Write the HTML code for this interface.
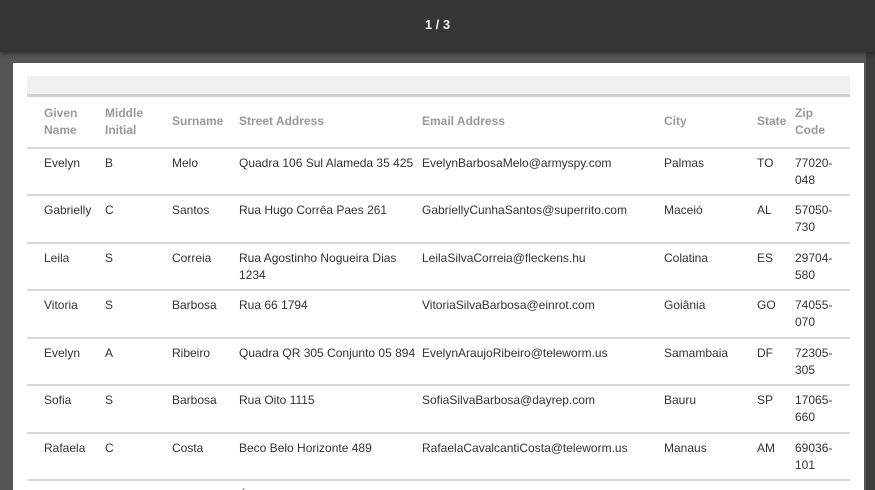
<!DOCTYPE html>
<html><head><meta charset="utf-8"><style>
*{margin:0;padding:0;box-sizing:border-box}
html,body{width:875px;height:490px;overflow:hidden}
body{background:#525659;font-family:"Liberation Sans",Arial,sans-serif;position:relative}
.top{position:absolute;left:0;top:0;width:875px;height:52px;background:#323639;color:#f1f1f1;font-size:13px;font-weight:bold;text-align:center;line-height:50px;box-shadow:0 2px 4px rgba(0,0,0,.4);z-index:2}
.sb{position:absolute;right:0;top:52px;width:9px;height:438px;background:#3b3e41}
.page{position:absolute;left:13px;top:63px;width:851px;height:427px;background:#fff;overflow:hidden}
.band{position:absolute;left:14px;top:13px;width:823px;height:18px;background:#f0f0f0}
table{position:absolute;left:14px;top:31px;width:823px;border-collapse:collapse;table-layout:fixed;font-size:12px;color:#333}
td,th{padding:6px 2px 0 4px;vertical-align:top;line-height:17px;text-align:left;font-weight:normal;height:47.5px;border-top:2px solid #d8d8d8}
th{color:#999;font-weight:bold;vertical-align:middle;padding-top:0;height:52px;border-top:3px solid #d0d0d0}
td:first-child,th:first-child{padding-left:17px}
th:last-child{padding-right:14px}
</style></head><body>
<div class="top">1 / 3</div>
<div class="sb"></div>
<div class="page">
<div class="band"></div>
<table>
<colgroup><col style="width:74px"><col style="width:67px"><col style="width:67px"><col style="width:183px"><col style="width:242px"><col style="width:93px"><col style="width:38px"><col style="width:59px"></colgroup>
<tr><th>Given Name</th><th>Middle Initial</th><th>Surname</th><th>Street Address</th><th>Email Address</th><th>City</th><th>State</th><th>Zip Code</th></tr>
<tr><td>Evelyn</td><td>B</td><td>Melo</td><td>Quadra 106 Sul Alameda 35 425</td><td>EvelynBarbosaMelo@armyspy.com</td><td>Palmas</td><td>TO</td><td>77020-048</td></tr>
<tr><td>Gabrielly</td><td>C</td><td>Santos</td><td>Rua Hugo Corrêa Paes 261</td><td>GabriellyCunhaSantos@superrito.com</td><td>Maceió</td><td>AL</td><td>57050-730</td></tr>
<tr><td>Leila</td><td>S</td><td>Correia</td><td>Rua Agostinho Nogueira Dias 1234</td><td>LeilaSilvaCorreia@fleckens.hu</td><td>Colatina</td><td>ES</td><td>29704-580</td></tr>
<tr><td>Vitoria</td><td>S</td><td>Barbosa</td><td>Rua 66 1794</td><td>VitoriaSilvaBarbosa@einrot.com</td><td>Goiânia</td><td>GO</td><td>74055-070</td></tr>
<tr><td>Evelyn</td><td>A</td><td>Ribeiro</td><td style="white-space:nowrap">Quadra QR 305 Conjunto 05 894</td><td>EvelynAraujoRibeiro@teleworm.us</td><td>Samambaia</td><td>DF</td><td>72305-305</td></tr>
<tr><td>Sofia</td><td>S</td><td>Barbosa</td><td>Rua Oito 1115</td><td>SofiaSilvaBarbosa@dayrep.com</td><td>Bauru</td><td>SP</td><td>17065-660</td></tr>
<tr><td>Rafaela</td><td>C</td><td>Costa</td><td>Beco Belo Horizonte 489</td><td>RafaelaCavalcantiCosta@teleworm.us</td><td>Manaus</td><td>AM</td><td>69036-101</td></tr>
<tr><td>Isabelle</td><td>R</td><td>Pereira</td><td>Área Especial 1</td><td>IsabelleRochaPereira@rhyta.com</td><td>Brasília</td><td>DF</td><td>70000-000</td></tr>
</table>
</div>
</body></html>
